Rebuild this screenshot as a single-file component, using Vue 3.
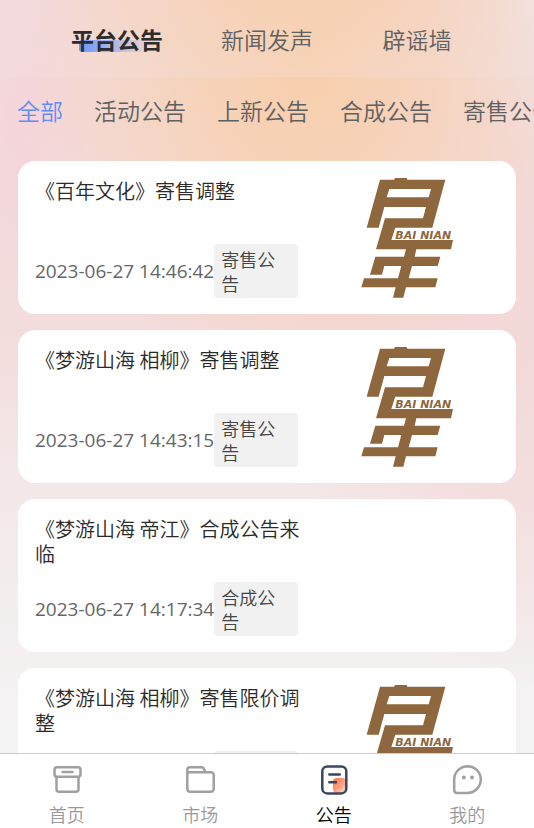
<template>
  <div class="page">
    <header class="tabs">
      <button
        v-for="tab in tabs"
        :key="tab"
        type="button"
        class="tab"
        :class="{ active: tab === activeTab }"
        @click="activeTab = tab"
      >
        <span class="tab-text">{{ tab }}</span>
      </button>
    </header>

    <div class="filters">
      <button
        v-for="item in filters"
        :key="item"
        type="button"
        class="filter"
        :class="{ active: item === activeFilter }"
        @click="activeFilter = item"
      >
        {{ item }}
      </button>
    </div>

    <main class="list">
      <article v-for="notice in notices" :key="notice.time" class="card">
        <div class="info">
          <h2 class="title">{{ notice.title }}</h2>
          <div class="meta">
            <time class="time">{{ notice.time }}</time>
            <span class="tag">{{ notice.type }}</span>
          </div>
        </div>
        <svg v-if="notice.cover" class="cover" viewBox="0 36 360 360" role="img">
          <path
            fill-rule="evenodd"
            d="M90 41H132L135 36H170L172 41H286L247 185H136L124 222H309L303 250H199L194 272H271L263 300H186L176 337H263L256 364H168L160 395H129L137 364H34L42 337H144L154 300H103L96 326H60L76 272H162L168 250H78L105 157H219L228 123H103L86 185H50ZM118 69L110 94H236L243 69Z"
          />
          <path class="cover-strip" d="M135 190H312L306 222H126Z" />
          <text x="136" y="218">BAI NIAN</text>
        </svg>
      </article>
    </main>

    <nav class="nav">
      <a
        v-for="item in navItems"
        :key="item.name"
        href="#"
        class="nav-item"
        :class="{ active: item.name === activeNav }"
        @click.prevent="activeNav = item.name"
      >
        <svg class="nav-icon" viewBox="0 0 32 32" aria-hidden="true">
          <g v-if="item.icon === 'home'">
            <rect x="3.5" y="3.3" width="26" height="9.5" rx="2.5" />
            <path d="M5.5 13V25.3a2.5 2.5 0 0 0 2.5 2.5H25a2.5 2.5 0 0 0 2.5-2.5V13M11.5 8h10" />
          </g>
          <g v-else-if="item.icon === 'market'">
            <path
              d="M3.3 25V5.8a2.5 2.5 0 0 1 2.5-2.5H17.5c1.5 0 2.5 1 3 2.5l.8 2.5H27a2.7 2.7 0 0 1 2.7 2.7V25a2.8 2.8 0 0 1-2.8 2.8H6a2.7 2.7 0 0 1-2.7-2.8zM3.3 8.3h18"
            />
          </g>
          <g v-else-if="item.icon === 'notice'">
            <defs>
              <linearGradient id="glow" x1="0" y1="0" x2="1" y2="1">
                <stop offset="0" stop-color="#ff7448" />
                <stop offset="0.5" stop-color="#ff9c7c" />
                <stop offset="1" stop-color="#ffe3da" />
              </linearGradient>
            </defs>
            <rect class="glow" x="15" y="14" width="13" height="15" rx="4" />
            <rect x="4.3" y="2.4" width="24" height="27" rx="5" />
            <path d="M11.3 10.5h10.5M11.3 18.3h6.7" />
          </g>
          <g v-else>
            <path
              d="M16.5 2.3A13.3 13.3 0 0 1 16.5 28.9H6a3 3 0 0 1-2.8-3V15.6A13.3 13.3 0 0 1 16.5 2.3z"
            />
            <circle class="dot" cx="12.8" cy="13.5" r="1.9" />
            <circle class="dot" cx="21" cy="13.5" r="1.9" />
          </g>
        </svg>
        <span class="nav-name">{{ item.name }}</span>
      </a>
    </nav>
  </div>
</template>

<script setup>
import { ref } from 'vue'

const tabs = ['平台公告', '新闻发声', '辟谣墙']
const filters = ['全部', '活动公告', '上新公告', '合成公告', '寄售公告']
const activeTab = ref('平台公告')
const activeFilter = ref('全部')
const activeNav = ref('公告')

const notices = [
  { title: '《百年文化》寄售调整', time: '2023-06-27 14:46:42', type: '寄售公告', cover: true },
  { title: '《梦游山海 相柳》寄售调整', time: '2023-06-27 14:43:15', type: '寄售公告', cover: true },
  { title: '《梦游山海 帝江》合成公告来临', time: '2023-06-27 14:17:34', type: '合成公告', cover: false },
  { title: '《梦游山海 相柳》寄售限价调整', time: '2023-06-27 14:10:08', type: '寄售公告', cover: true },
]

const navItems = [
  { name: '首页', icon: 'home' },
  { name: '市场', icon: 'market' },
  { name: '公告', icon: 'notice' },
  { name: '我的', icon: 'mine' },
]
</script>

<style>
body {
  background: #f4f3f4;
}
</style>

<style scoped>
.page {
  height: 100vh;
  display: flex;
  flex-direction: column;
  font-family: 'Noto Sans CJK SC', sans-serif;
  font-weight: 350;
  background:
    radial-gradient(ellipse 52% 38% at 57% 8%, #f8cfac 0%, rgba(247, 208, 176, 0.75) 40%, rgba(247, 214, 190, 0) 100%),
    radial-gradient(ellipse 20% 20% at 100% 0, #f1e5e6 0%, rgba(241, 229, 230, 0) 100%),
    radial-gradient(ellipse 15% 20% at 5% 15%, #f5d5da 0%, rgba(245, 213, 218, 0) 100%),
    radial-gradient(ellipse 50% 28% at 85% 38%, #f3d8d7 0%, rgba(243, 216, 215, 0) 100%),
    radial-gradient(ellipse 40% 25% at 100% 58%, rgba(243, 220, 220, 0.8) 0%, rgba(243, 220, 220, 0) 100%),
    linear-gradient(#f2dbdc 0%, #f3dcdc 40%, #f3e8e8 58%, #f4f3f4 88%);
}

.tabs {
  display: flex;
  padding: 0 42px;
  background: linear-gradient(rgba(243, 225, 225, 0), rgba(243, 225, 225, 0.25));
}

.tab,
.filter {
  padding: 0;
  border: none;
  background: none;
  font: inherit;
  font-size: 23px;
  color: #606060;
  white-space: nowrap;
  cursor: pointer;
}

.tab {
  flex: 1;
  height: 77px;
}

.tab-text {
  position: relative;
  z-index: 0;
}

.tab.active {
  color: #2c2c2c;
  font-weight: 700;
}

.tab.active .tab-text::before {
  content: '';
  position: absolute;
  z-index: -1;
  left: 8px;
  bottom: 4px;
  width: 72px;
  height: 12px;
  border-radius: 3px;
  background: linear-gradient(90deg, #6b98fb, rgba(107, 152, 251, 0));
}

.filters {
  display: flex;
  gap: 31px;
  padding: 0 17px;
  overflow: hidden;
}

.filter {
  flex: none;
  height: 66px;
}

.filter.active {
  color: #5f8df5;
}

.list {
  flex: 1;
  min-height: 0;
  overflow: hidden;
  padding: 18px 18px 0;
}

.card {
  display: flex;
  justify-content: space-between;
  margin-bottom: 16px;
  padding: 17px 46px 16px 17px;
  border-radius: 17px;
  background: #fff;
}

.info {
  display: flex;
  flex-direction: column;
  justify-content: space-between;
  width: 268px;
  min-height: 120px;
}

.title {
  margin: 0;
  font-size: 20px;
  font-weight: 350;
  line-height: 25px;
  color: #2a2a2a;
}

.meta {
  display: flex;
  align-items: center;
}

.time {
  font-family: 'Open Sans', sans-serif;
  font-size: 19px;
  font-weight: 400;
  color: #666;
  white-space: nowrap;
}

.tag {
  box-sizing: border-box;
  width: 84px;
  padding: 3px 7px;
  border-radius: 4px;
  background: #f1f1f1;
  font-size: 18px;
  line-height: 24px;
  color: #444;
}

.cover {
  width: 120px;
  height: 120px;
  fill: #8f673e;
}

.cover-strip {
  fill: #fff;
}

.cover text {
  font: italic 700 33px 'DejaVu Sans', sans-serif;
}

.nav {
  display: flex;
  padding: 10px 0 2px;
  border-top: 1px solid #ccc;
  background: #fff;
}

.nav-item {
  flex: 1;
  display: flex;
  flex-direction: column;
  align-items: center;
  gap: 6px;
  color: #999;
  text-decoration: none;
}

.nav-item.active {
  color: #000;
}

.nav-icon {
  width: 32px;
  height: 32px;
  fill: none;
  stroke: #a0a0a0;
  stroke-width: 2.5;
  stroke-linecap: round;
  stroke-linejoin: round;
}

.nav-item.active .nav-icon {
  stroke: #3c465b;
}

.nav-icon .glow {
  fill: url(#glow);
  stroke: none;
}

.nav-icon .dot {
  fill: #a0a0a0;
  stroke: none;
}

.nav-name {
  font-size: 18px;
  line-height: 24px;
}
</style>
